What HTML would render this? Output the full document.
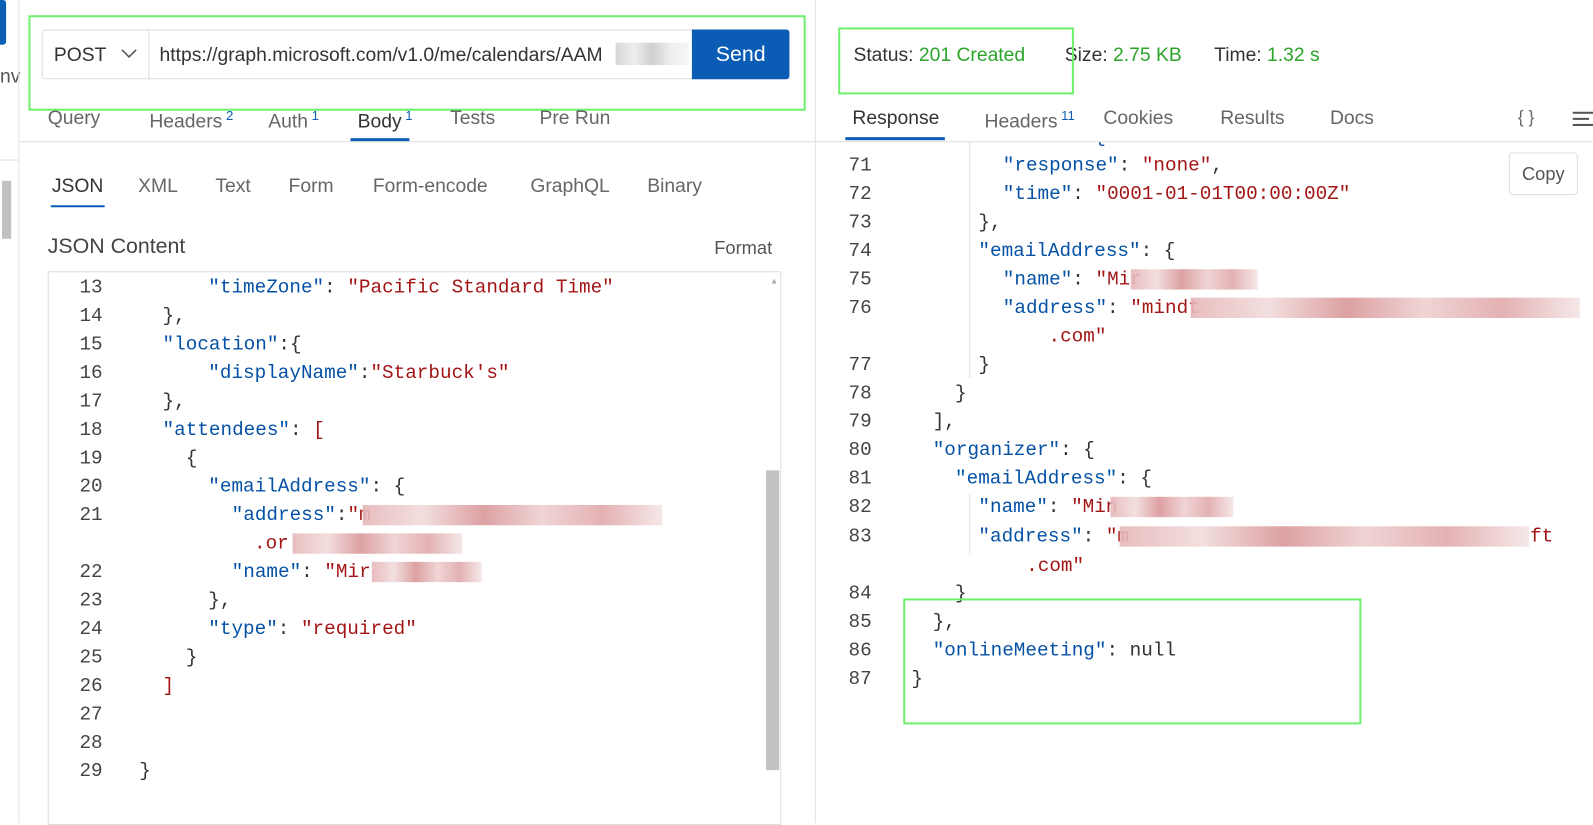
<!DOCTYPE html>
<html><head><meta charset="utf-8"><style>
*{margin:0;padding:0;box-sizing:border-box}
body{width:1593px;height:810px;background:#fff;overflow:hidden;font-family:"Liberation Sans",sans-serif;color:#333}
#w{position:absolute;left:0;top:0;width:1568px;height:798px;transform:scale(1.016);transform-origin:0 0}
.a{position:absolute;white-space:pre}
.t{font-size:19px;color:#666}
.c{font-family:"Liberation Mono",monospace;font-size:19px;line-height:28px;height:28px}
.k{color:#0451a5}.s{color:#a31515}.p{color:#333}
.n{color:#444;width:40px;text-align:right}
.g{position:absolute;border:2px solid #6ef06e}
.b{position:absolute;background:linear-gradient(90deg,#e6b6b8,#f2dcdc,#d99799,#efd0d1,#e1a9ab,#f5e6e6);height:20px;opacity:.9}
</style></head><body><div id="w">
<div class="a" style="left:0;top:0;width:6px;height:44px;background:#0d5fb3;border-radius:0 3px 3px 0"></div>
<div class="a t" style="left:0;top:65px;color:#555">nv</div>
<div class="a" style="left:0;top:157px;width:18px;height:1px;background:#ddd"></div>
<div class="a" style="left:18px;top:0;width:1px;height:810px;background:#e3e3e3"></div>
<div class="a" style="left:2px;top:178px;width:9px;height:57px;background:#c1c1c1"></div>
<div class="a" style="left:41px;top:29px;width:735px;height:49px;border:1px solid #ddd;border-radius:3px"></div>
<div class="a" style="left:146px;top:29px;width:1px;height:49px;background:#ddd"></div>
<div class="a t" style="left:53px;top:44px;color:#333">POST</div>
<svg class="a" style="left:119px;top:48px" width="16" height="10"><path d="M1 1l7 7 7-7" fill="none" stroke="#555" stroke-width="1.5"/></svg>
<div class="a t" style="left:157px;top:44px;color:#333">https://graph.microsoft.com/v1.0/me/calendars/AAM</div>
<div class="a" style="left:606px;top:42px;width:72px;height:22px;background:linear-gradient(90deg,#d6d6d6,#efefef,#cfcfcf,#eee,#f7f7f7)"></div>
<div class="a" style="left:681px;top:29px;width:96px;height:49px;background:#0b5cb5;border-radius:0 3px 3px 0;color:#fff;font-size:21px;text-align:center;line-height:49px">Send</div>
<div class="g" style="left:28px;top:15px;width:765px;height:94px"></div>
<div class="a t" style="left:47px;top:106px">Query</div>
<div class="a t" style="left:147px;top:106px">Headers<sup style="color:#0b5cb5;font-size:13px"> 2</sup></div>
<div class="a t" style="left:264px;top:106px">Auth<sup style="color:#0b5cb5;font-size:13px"> 1</sup></div>
<div class="a t" style="left:352px;top:106px;color:#333">Body<sup style="color:#0b5cb5;font-size:13px"> 1</sup></div>
<div class="a" style="left:345px;top:136px;width:58px;height:3px;background:#0b5cb5"></div>
<div class="a t" style="left:443px;top:106px">Tests</div>
<div class="a t" style="left:531px;top:106px">Pre Run</div>
<div class="a" style="left:19px;top:139px;width:783px;height:1px;background:#ddd"></div>
<div class="a t" style="left:51px;top:173px;color:#333">JSON</div>
<div class="a" style="left:50px;top:202px;width:53px;height:2px;background:#0b5cb5"></div>
<div class="a t" style="left:136px;top:173px">XML</div>
<div class="a t" style="left:212px;top:173px">Text</div>
<div class="a t" style="left:284px;top:173px">Form</div>
<div class="a t" style="left:367px;top:173px">Form-encode</div>
<div class="a t" style="left:522px;top:173px">GraphQL</div>
<div class="a t" style="left:637px;top:173px">Binary</div>
<div class="a" style="left:47px;top:231px;font-size:21px;color:#444">JSON Content</div>
<div class="a" style="left:703px;top:234px;font-size:18px;color:#555">Format</div>
<div class="a" style="left:47px;top:267px;width:722px;height:545px;border:1px solid #ddd"></div>
<div class="a" style="left:754px;top:463px;width:13px;height:295px;background:#c1c1c1"></div>
<div class="a" style="left:758px;top:272px;font-size:8px;color:#aaa">▲</div>
<div class="a" style="left:802px;top:0;width:1px;height:810px;background:#e3e3e3"></div>

<div class="a c n" style="left:61px;top:269px">13</div><div class="a c" style="left:205px;top:269px"><span class="k">"timeZone"</span>: <span class="s">"Pacific Standard Time"</span></div>
<div class="a c n" style="left:61px;top:297px">14</div><div class="a c" style="left:160px;top:297px">},</div>
<div class="a c n" style="left:61px;top:325px">15</div><div class="a c" style="left:160px;top:325px"><span class="k">"location"</span>:{</div>
<div class="a c n" style="left:61px;top:353px">16</div><div class="a c" style="left:205px;top:353px"><span class="k">"displayName"</span>:<span class="s">"Starbuck's"</span></div>
<div class="a c n" style="left:61px;top:381px">17</div><div class="a c" style="left:160px;top:381px">},</div>
<div class="a c n" style="left:61px;top:409px">18</div><div class="a c" style="left:160px;top:409px"><span class="k">"attendees"</span>: <span class="s">[</span></div>
<div class="a c n" style="left:61px;top:437px">19</div><div class="a c" style="left:183px;top:437px">{</div>
<div class="a c n" style="left:61px;top:465px">20</div><div class="a c" style="left:205px;top:465px"><span class="k">"emailAddress"</span>: {</div>
<div class="a c n" style="left:61px;top:493px">21</div><div class="a c" style="left:228px;top:493px"><span class="k">"address"</span>:<span class="s">"m</span></div>
<div class="b" style="left:357px;top:497px;width:295px"></div>
<div class="a c" style="left:250px;top:521px"><span class="s">.or</span></div>
<div class="b" style="left:288px;top:525px;width:167px"></div>
<div class="a c n" style="left:61px;top:549px">22</div><div class="a c" style="left:228px;top:549px"><span class="k">"name"</span>: <span class="s">"Mir</span></div>
<div class="b" style="left:366px;top:553px;width:108px"></div>
<div class="a c n" style="left:61px;top:577px">23</div><div class="a c" style="left:205px;top:577px">},</div>
<div class="a c n" style="left:61px;top:605px">24</div><div class="a c" style="left:205px;top:605px"><span class="k">"type"</span>: <span class="s">"required"</span></div>
<div class="a c n" style="left:61px;top:633px">25</div><div class="a c" style="left:183px;top:633px">}</div>
<div class="a c n" style="left:61px;top:661px">26</div><div class="a c" style="left:160px;top:661px"><span class="s">]</span></div>
<div class="a c n" style="left:61px;top:689px">27</div>
<div class="a c n" style="left:61px;top:717px">28</div>
<div class="a c n" style="left:61px;top:745px">29</div><div class="a c" style="left:137px;top:745px">}</div>

<div class="a" style="left:840px;top:44px;font-size:19px"><span style="color:#333">Status: </span><span style="color:#2aa52a">201 Created</span></div>
<div class="a" style="left:1048px;top:44px;font-size:19px"><span style="color:#333">Size: </span><span style="color:#2aa52a">2.75 KB</span></div>
<div class="a" style="left:1195px;top:44px;font-size:19px"><span style="color:#333">Time: </span><span style="color:#2aa52a">1.32 s</span></div>
<div class="g" style="left:825px;top:27px;width:232px;height:66px"></div>
<div class="a t" style="left:839px;top:106px;color:#333">Response</div>
<div class="a" style="left:832px;top:135px;width:98px;height:3px;background:#0b5cb5"></div>
<div class="a t" style="left:969px;top:106px">Headers<sup style="color:#0b5cb5;font-size:13px"> 11</sup></div>
<div class="a t" style="left:1086px;top:106px">Cookies</div>
<div class="a t" style="left:1201px;top:106px">Results</div>
<div class="a t" style="left:1309px;top:106px">Docs</div>
<div class="a t" style="left:1494px;top:106px;font-size:17px">{ }</div>
<div class="a" style="left:1548px;top:110px;width:20px;height:2px;background:#555"></div>
<div class="a" style="left:1548px;top:116px;width:16px;height:2px;background:#555"></div>
<div class="a" style="left:1548px;top:122px;width:20px;height:2px;background:#555"></div>
<div class="a" style="left:803px;top:139px;width:790px;height:1px;background:#ddd"></div>
<div class="a" style="left:803px;top:140px;width:790px;height:10px;overflow:hidden">
  <div class="a c" style="left:160px;top:-19px;color:#0451a5">"status": {</div>
  <div class="a c n" style="left:15px;top:-19px">70</div>
</div>
<div class="a" style="left:1485px;top:150px;width:68px;height:42px;border:1px solid #ddd;border-radius:4px;font-size:18px;color:#555;text-align:center;line-height:40px;background:#fff">Copy</div>
<div class="a" style="left:954px;top:140px;width:1px;height:232px;background:#ddd"></div>
<div class="a" style="left:954px;top:486px;width:1px;height:60px;background:#ddd"></div>
<div class="a c n" style="left:818px;top:149px">71</div><div class="a c" style="left:987px;top:149px"><span class="k">"response"</span>: <span class="s">"none"</span>,</div>
<div class="a c n" style="left:818px;top:177px">72</div><div class="a c" style="left:987px;top:177px"><span class="k">"time"</span>: <span class="s">"0001-01-01T00:00:00Z"</span></div>
<div class="a c n" style="left:818px;top:205px">73</div><div class="a c" style="left:963px;top:205px">},</div>
<div class="a c n" style="left:818px;top:233px">74</div><div class="a c" style="left:963px;top:233px"><span class="k">"emailAddress"</span>: {</div>
<div class="a c n" style="left:818px;top:261px">75</div><div class="a c" style="left:987px;top:261px"><span class="k">"name"</span>: <span class="s">"Mir</span></div>
<div class="b" style="left:1113px;top:265px;width:125px"></div>
<div class="a c n" style="left:818px;top:289px">76</div><div class="a c" style="left:987px;top:289px"><span class="k">"address"</span>: <span class="s">"mindt</span></div>
<div class="b" style="left:1172px;top:293px;width:383px"></div>
<div class="a c" style="left:1032px;top:317px"><span class="s">.com"</span></div>
<div class="a c n" style="left:818px;top:345px">77</div><div class="a c" style="left:963px;top:345px">}</div>
<div class="a c n" style="left:818px;top:373px">78</div><div class="a c" style="left:940px;top:373px">}</div>
<div class="a c n" style="left:818px;top:401px">79</div><div class="a c" style="left:918px;top:401px">],</div>
<div class="a c n" style="left:818px;top:429px">80</div><div class="a c" style="left:918px;top:429px"><span class="k">"organizer"</span>: {</div>
<div class="a c n" style="left:818px;top:457px">81</div><div class="a c" style="left:940px;top:457px"><span class="k">"emailAddress"</span>: {</div>
<div class="a c n" style="left:818px;top:485px">82</div><div class="a c" style="left:963px;top:485px"><span class="k">"name"</span>: <span class="s">"Min</span></div>
<div class="b" style="left:1093px;top:489px;width:121px"></div>
<div class="a c n" style="left:818px;top:514px">83</div><div class="a c" style="left:963px;top:514px"><span class="k">"address"</span>: <span class="s">"m</span></div>
<div class="b" style="left:1102px;top:518px;width:403px"></div>
<div class="a c" style="left:1506px;top:514px"><span class="s">ft</span></div>
<div class="a c" style="left:1010px;top:543px"><span class="s">.com"</span></div>
<div class="a c n" style="left:818px;top:570px">84</div><div class="a c" style="left:940px;top:570px">}</div>
<div class="a c n" style="left:818px;top:598px">85</div><div class="a c" style="left:918px;top:598px">},</div>
<div class="a c n" style="left:818px;top:626px">86</div><div class="a c" style="left:918px;top:626px"><span class="k">"onlineMeeting"</span>: null</div>
<div class="a c n" style="left:818px;top:654px">87</div><div class="a c" style="left:897px;top:654px">}</div>
<div class="g" style="left:889px;top:589px;width:451px;height:124px"></div>
</div></body></html>
